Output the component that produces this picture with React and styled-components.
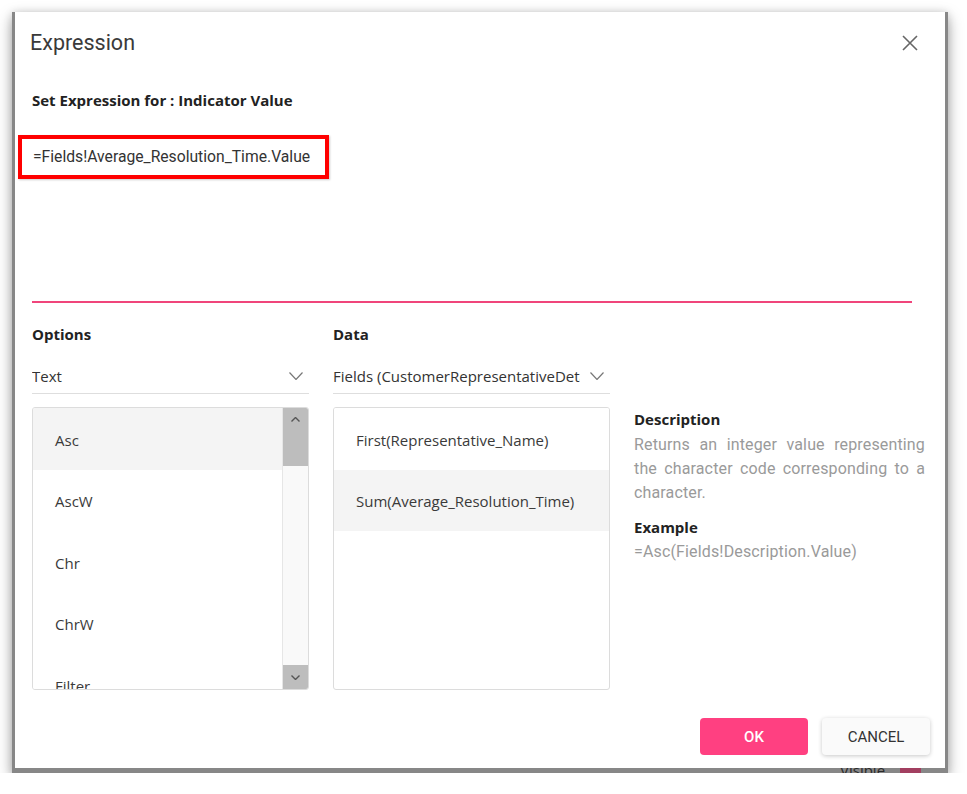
import React from "react";
import styled, { createGlobalStyle } from "styled-components";

const GlobalStyle = createGlobalStyle`
  html, body {
    margin: 0;
    padding: 0;
    background: #ffffff;
  }
  body {
    font-family: "Open Sans", "Noto Sans", sans-serif;
    color: #333;
  }
  * {
    box-sizing: border-box;
  }
`;

const Backdrop = styled.div`
  position: relative;
  margin: 12px 0 0 12px;
  width: 936px;
  height: 761px;
  padding: 0 1px 5px 3px;
  background: #878787;
  box-shadow: 0 6px 14px rgba(0, 0, 0, 0.35), 0 0 8px rgba(0, 0, 0, 0.12);
  overflow: hidden;
`;

const UnderLabel = styled.span`
  position: absolute;
  left: 828px;
  top: 748px;
  font-family: "Open Sans", sans-serif;
  font-size: 15px;
  color: #2a2a2a;
`;

const UnderCheck = styled.span`
  position: absolute;
  left: 888px;
  top: 752px;
  width: 21px;
  height: 21px;
  background: #a23f60;
`;

const Dialog = styled.div`
  position: relative;
  z-index: 1;
  width: 930px;
  height: 756px;
  background: #fff;
  padding: 0 15px 0 17px;
  display: flex;
  flex-direction: column;
`;

const Header = styled.div`
  display: flex;
  align-items: center;
  justify-content: space-between;
  height: 62px;
  padding: 0 12px 0 0;
`;

const Title = styled.h1`
  margin: 0 0 0 -2px;
  font-family: Roboto, sans-serif;
  font-weight: 400;
  font-size: 21.5px;
  line-height: 24px;
  color: #3a3a3a;
`;

const CloseButton = styled.button`
  border: none;
  background: transparent;
  padding: 0;
  width: 16px;
  height: 16px;
  display: flex;
  cursor: pointer;
`;

const SubTitle = styled.div`
  margin-top: 16px;
  font-family: "Open Sans", sans-serif;
  font-weight: 700;
  font-size: 15px;
  line-height: 20px;
  color: #222;
`;

const Editor = styled.div`
  height: 191px;
  padding-top: 25px;
`;

const Highlight = styled.span`
  display: inline-block;
  margin-left: -14px;
  width: 311px;
  border: 4px solid #ff0000;
  padding: 8px 0 8px 11px;
  font-family: Roboto, sans-serif;
  font-size: 15.7px;
  line-height: 20px;
  color: #333;
  white-space: nowrap;
  box-shadow: 1px 1px 2px rgba(0, 0, 0, 0.2);
`;

const PinkRule = styled.div`
  height: 2px;
  margin-right: 18px;
  background: #f0457b;
`;

const Panels = styled.div`
  display: grid;
  grid-template-columns: 277px 277px 1fr;
  column-gap: 24px;
  margin-top: 21px;
  padding-right: 5px;
`;

const Column = styled.div`
  display: flex;
  flex-direction: column;
`;

const Label = styled.div`
  font-family: "Open Sans", sans-serif;
  font-weight: 700;
  font-size: 15px;
  line-height: 20px;
  color: #222;
`;

const Dropdown = styled.div`
  margin-top: 16px;
  height: 34px;
  display: flex;
  align-items: center;
  border-bottom: 1px solid #dedede;
  padding: 0 6px 2px 0;
  font-family: "Open Sans", sans-serif;
  font-size: 15px;
  color: #333;
  white-space: nowrap;
`;

const DropText = styled.span`
  flex: 1;
  min-width: 0;
  overflow: hidden;
  margin-right: 10px;
`;

const ListBox = styled.div`
  margin-top: 13px;
  height: 283px;
  border: 1px solid #dcdcdc;
  border-radius: 3px;
  display: flex;
  overflow: hidden;
`;

const Items = styled.div`
  flex: 1;
  overflow: hidden;
`;

const Item = styled.div`
  height: 61.5px;
  display: flex;
  align-items: center;
  padding: 2px 0 0 22px;
  font-family: "Open Sans", sans-serif;
  font-size: 15px;
  color: #3a3a3a;
  background: ${(p) => (p.$active ? "#f4f4f4" : "#fff")};
  white-space: nowrap;
`;

const ScrollBar = styled.div`
  width: 26px;
  background: #f9f9f9;
  border-left: 1px solid #e6e6e6;
  display: flex;
  flex-direction: column;
  justify-content: space-between;
`;

const ScrollPart = styled.div`
  height: ${(p) => p.$h}px;
  background: #bdbdbd;
  display: flex;
  justify-content: center;
  align-items: ${(p) => (p.$top ? "flex-start" : "center")};
  padding-top: ${(p) => (p.$top ? "9px" : "0")};
`;

const Info = styled.div`
  padding-top: 85px;
`;

const InfoTitle = styled.div`
  font-family: "Open Sans", sans-serif;
  font-weight: 700;
  font-size: 15px;
  line-height: 20px;
  color: #222;
  margin-top: ${(p) => p.$mt || 0}px;
`;

const InfoText = styled.div`
  margin-top: ${(p) => p.$mt || 0}px;
  font-family: Roboto, sans-serif;
  font-size: 16px;
  line-height: 24px;
  letter-spacing: 0.15px;
  color: #9a9a9a;
  text-align: justify;
`;

const Footer = styled.div`
  margin-top: auto;
  margin-bottom: 13px;
  display: flex;
  justify-content: flex-end;
  gap: 14px;
`;

const Button = styled.button`
  width: 108px;
  height: 37px;
  border: none;
  border-radius: 4px;
  font-family: Roboto, sans-serif;
  font-size: 15px;
  font-weight: ${(p) => (p.$primary ? 500 : 400)};
  color: ${(p) => (p.$primary ? "#fff" : "#333")};
  background: ${(p) => (p.$primary ? "#ff4081" : "#fafafa")};
  box-shadow: ${(p) =>
    p.$primary ? "none" : "0 1px 4px rgba(0,0,0,0.22)"};
  cursor: pointer;
`;

const Chevron = ({ down = true, w = 14, h = 8, color = "#777", sw = 1.2 }) => (
  <svg width={w} height={h} viewBox={`0 0 ${w} ${h}`} style={{ flexShrink: 0 }}>
    <polyline
      points={
        down
          ? `0.5,0.5 ${w / 2},${h - 0.5} ${w - 0.5},0.5`
          : `0.5,${h - 0.5} ${w / 2},0.5 ${w - 0.5},${h - 0.5}`
      }
      fill="none"
      stroke={color}
      strokeWidth={sw}
    />
  </svg>
);

const CloseIcon = () => (
  <svg width="16" height="16" viewBox="0 0 16 16">
    <path d="M1 1 L15 15 M15 1 L1 15" stroke="#666" strokeWidth="1.6" fill="none" />
  </svg>
);

const options = ["Asc", "AscW", "Chr", "ChrW", "Filter"];
const fields = ["First(Representative_Name)", "Sum(Average_Resolution_Time)"];

export default function App() {
  return (
    <>
      <GlobalStyle />
      <Backdrop>
        <Dialog>
          <Header>
            <Title>Expression</Title>
            <CloseButton aria-label="close">
              <CloseIcon />
            </CloseButton>
          </Header>
          <SubTitle>Set Expression for : Indicator Value</SubTitle>
          <Editor>
            <Highlight>=Fields!Average_Resolution_Time.Value</Highlight>
          </Editor>
          <PinkRule />
          <Panels>
            <Column>
              <Label>Options</Label>
              <Dropdown>
                <DropText>Text</DropText>
                <Chevron />
              </Dropdown>
              <ListBox>
                <Items>
                  {options.map((o, i) => (
                    <Item key={o} $active={i === 0}>
                      {o}
                    </Item>
                  ))}
                </Items>
                <ScrollBar>
                  <ScrollPart $h={58} $top>
                    <Chevron down={false} w={9} h={5} color="#555" sw={1.4} />
                  </ScrollPart>
                  <ScrollPart $h={24}>
                    <Chevron w={9} h={5} color="#555" sw={1.4} />
                  </ScrollPart>
                </ScrollBar>
              </ListBox>
            </Column>
            <Column>
              <Label>Data</Label>
              <Dropdown>
                <DropText>Fields (CustomerRepresentativeDetails)</DropText>
                <Chevron />
              </Dropdown>
              <ListBox>
                <Items>
                  {fields.map((f, i) => (
                    <Item key={f} $active={i === 1}>
                      {f}
                    </Item>
                  ))}
                </Items>
              </ListBox>
            </Column>
            <Info>
              <InfoTitle>Description</InfoTitle>
              <InfoText $mt={4}>
                Returns an integer value representing the character code
                corresponding to a character.
              </InfoText>
              <InfoTitle $mt={12}>Example</InfoTitle>
              <InfoText $mt={3}>=Asc(Fields!Description.Value)</InfoText>
            </Info>
          </Panels>
          <Footer>
            <Button $primary>OK</Button>
            <Button>CANCEL</Button>
          </Footer>
        </Dialog>
        <UnderLabel>Visible</UnderLabel>
        <UnderCheck />
      </Backdrop>
    </>
  );
}
